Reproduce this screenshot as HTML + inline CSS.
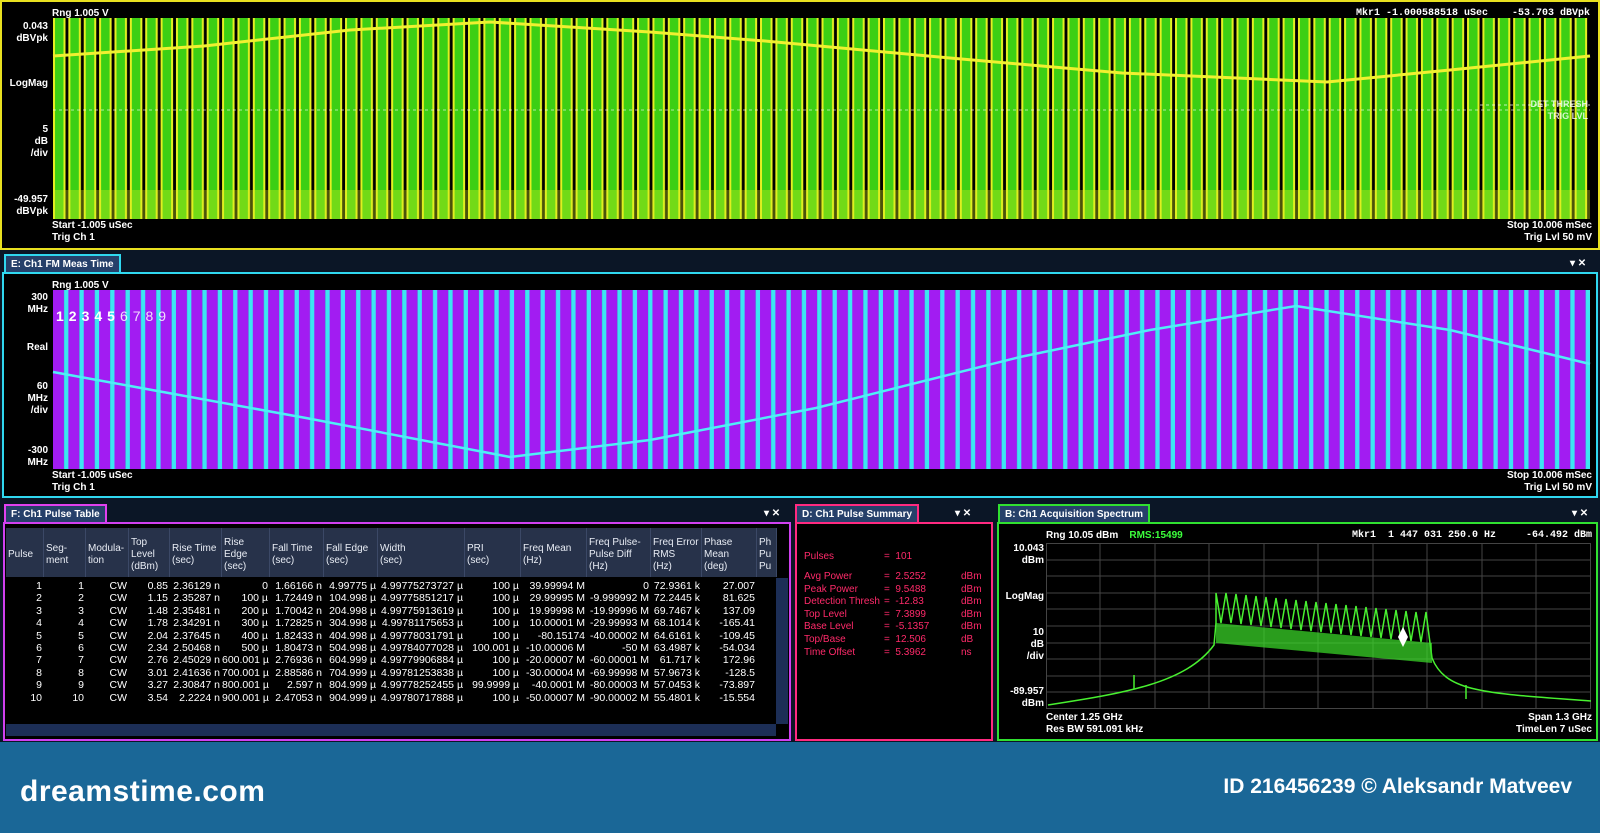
<!DOCTYPE html><html><head><meta charset="utf-8"><style>
*{margin:0;padding:0;box-sizing:border-box}
body{width:1600px;height:833px;background:#0b1626;overflow:hidden;position:relative;font-family:"Liberation Sans",sans-serif;color:#fff}
.a{position:absolute}
.lbl{position:absolute;font-size:10px;font-weight:bold;color:#fff;text-align:right;line-height:12px}
.tab{position:absolute;font-size:10px;font-weight:bold;color:#fff;padding:3px 5px;background:#26406a}
.row{position:absolute;left:6px;display:flex;font-size:10.5px;line-height:12.4px;color:#fff}
.row span{text-align:right;padding-right:2px;white-space:nowrap;overflow:hidden}
.hd{position:absolute;top:528px;left:6px;height:49px;display:flex;background:#27324a}
.hd span{font-size:10px;line-height:12px;color:#e8ecf4;padding:4px 2px 0 2px;border-right:1px solid #3b4866;white-space:nowrap;overflow:hidden;display:flex;align-items:center}
.sm{position:absolute;font-size:10px;color:#ff2a6a;line-height:12.6px}
</style></head><body>
<!-- Top panel -->
<div class="a" style="left:0;top:0;width:1600px;height:250px;border:2px solid #e8e020;background:#000"></div>
<svg class="a" style="left:0;top:0" width="1600" height="250">
<defs><pattern id="py" x="53" y="0" width="15.37" height="250" patternUnits="userSpaceOnUse">
<rect x="1" y="0" width="10.5" height="250" fill="#3ccf14" stroke="#e4f022" stroke-width="2"/></pattern></defs>
<rect x="53" y="18" width="1537" height="201" fill="url(#py)"/>
<rect x="53" y="190" width="1537" height="29" fill="#d8ee1e" opacity=".35"/>
<polyline fill="none" stroke="#f0f030" stroke-width="3" points="53,56 204,46 350,30 490,22 650,32 765,41 950,58 1122,73 1327,82 1450,70 1590,56"/>
<line x1="1480" y1="105" x2="1590" y2="105" stroke="#fff" stroke-dasharray="3 3" opacity=".7"/>
<line x1="53" y1="110" x2="1590" y2="110" stroke="#fff" stroke-dasharray="3 3" opacity=".6"/>
</svg>
<div class="lbl" style="left:52px;top:8px;text-align:left">Rng 1.005 V</div>
<div class="lbl" style="left:8px;top:21px;width:40px">0.043<br>dBVpk</div>
<div class="lbl" style="left:8px;top:78px;width:40px">LogMag</div>
<div class="lbl" style="left:8px;top:124px;width:40px">5<br>dB<br>/div</div>
<div class="lbl" style="left:4px;top:194px;width:44px">-49.957<br>dBVpk</div>
<div class="lbl" style="left:52px;top:220px;text-align:left">Start -1.005 uSec<br>Trig Ch 1</div>
<div class="lbl" style="left:1460px;top:220px;width:132px">Stop 10.006 mSec<br>Trig Lvl 50 mV</div>
<div class="lbl" style="left:1290px;top:8px;width:300px;font-family:'Liberation Mono',monospace">Mkr1 -1.000588518 uSec &nbsp;&nbsp; -53.703 dBVpk</div>
<div class="lbl" style="left:1500px;top:98px;width:88px;font-size:9px;opacity:.8">DET THRESH<br>TRIG LVL</div>
<!-- Middle panel -->
<div class="tab" style="left:4px;top:254px;border:2px solid #30d8f0;border-bottom:none">E: Ch1 FM Meas Time</div>
<div class="a" style="left:2px;top:272px;width:1596px;height:226px;border:2px solid #30d8f0;background:#000"></div>
<div class="lbl" style="left:1570px;top:258px">▾ ✕</div>
<svg class="a" style="left:0;top:0" width="1600" height="500">
<defs><pattern id="pp" x="53" y="0" width="15.37" height="500" patternUnits="userSpaceOnUse">
<rect x="0" y="0" width="11" height="500" fill="#a21cf2"/><rect x="11" y="0" width="4.4" height="500" fill="#3ce6f2"/></pattern></defs>
<rect x="53" y="290" width="1537" height="179" fill="url(#pp)"/>
<polyline fill="none" stroke="#50eef6" stroke-width="2.5" points="53,372 306,418 510,457 650,440 816,408 1020,357 1150,330 1296,306 1450,330 1590,364"/>
</svg>
<div class="lbl" style="left:52px;top:280px;text-align:left">Rng 1.005 V</div>
<div class="lbl" style="left:8px;top:292px;width:40px">300<br>MHz</div>
<div class="lbl" style="left:8px;top:342px;width:40px">Real</div>
<div class="lbl" style="left:8px;top:381px;width:40px">60<br>MHz<br>/div</div>
<div class="lbl" style="left:8px;top:445px;width:40px">-300<br>MHz</div>
<div class="lbl" style="left:56px;top:310px;font-size:14px;text-align:left;letter-spacing:5px">12345<span style="font-weight:normal;opacity:.85">6789</span></div>
<div class="lbl" style="left:52px;top:470px;text-align:left">Start -1.005 uSec<br>Trig Ch 1</div>
<div class="lbl" style="left:1460px;top:470px;width:132px">Stop 10.006 mSec<br>Trig Lvl 50 mV</div>
<!-- Table panel -->
<div class="tab" style="left:4px;top:504px;border:2px solid #e040f0;border-bottom:none">F: Ch1 Pulse Table</div>
<div class="lbl" style="left:764px;top:508px">▾ ✕</div>
<div class="a" style="left:3px;top:522px;width:788px;height:219px;border:2px solid #d040f0;background:#000"></div>
<div class="hd">
<span style="width:38px">Pulse</span><span style="width:42px">Seg-<br>ment</span><span style="width:43px">Modula-<br>tion</span><span style="width:41px">Top<br>Level<br>(dBm)</span><span style="width:52px">Rise Time<br>(sec)</span><span style="width:48px">Rise<br>Edge<br>(sec)</span><span style="width:54px">Fall Time<br>(sec)</span><span style="width:54px">Fall Edge<br>(sec)</span><span style="width:87px">Width<br>(sec)</span><span style="width:56px">PRI<br>(sec)</span><span style="width:66px">Freq Mean<br>(Hz)</span><span style="width:64px">Freq Pulse-<br>Pulse Diff<br>(Hz)</span><span style="width:51px">Freq Error<br>RMS<br>(Hz)</span><span style="width:55px">Phase<br>Mean<br>(deg)</span><span style="width:20px">Ph<br>Pu<br>Pu</span>
</div>
<div class="a" style="left:776px;top:578px;width:12px;height:146px;background:#1c2e56"></div>
<div class="a" style="left:6px;top:724px;width:770px;height:12px;background:#1c2e56"></div>
<div id="rows"></div>
<div class="row" style="top:580px"><span style="width:38px">1</span><span style="width:42px">1</span><span style="width:43px">CW</span><span style="width:41px">0.85</span><span style="width:52px">2.36129 n</span><span style="width:48px">0</span><span style="width:54px">1.66166 n</span><span style="width:54px">4.99775 µ</span><span style="width:87px">4.99775273727 µ</span><span style="width:56px">100 µ</span><span style="width:66px">39.99994 M</span><span style="width:64px">0</span><span style="width:51px">72.9361 k</span><span style="width:55px">27.007</span></div>
<div class="row" style="top:592.4px"><span style="width:38px">2</span><span style="width:42px">2</span><span style="width:43px">CW</span><span style="width:41px">1.15</span><span style="width:52px">2.35287 n</span><span style="width:48px">100 µ</span><span style="width:54px">1.72449 n</span><span style="width:54px">104.998 µ</span><span style="width:87px">4.99775851217 µ</span><span style="width:56px">100 µ</span><span style="width:66px">29.99995 M</span><span style="width:64px">-9.999992 M</span><span style="width:51px">72.2445 k</span><span style="width:55px">81.625</span></div>
<div class="row" style="top:604.8px"><span style="width:38px">3</span><span style="width:42px">3</span><span style="width:43px">CW</span><span style="width:41px">1.48</span><span style="width:52px">2.35481 n</span><span style="width:48px">200 µ</span><span style="width:54px">1.70042 n</span><span style="width:54px">204.998 µ</span><span style="width:87px">4.99775913619 µ</span><span style="width:56px">100 µ</span><span style="width:66px">19.99998 M</span><span style="width:64px">-19.99996 M</span><span style="width:51px">69.7467 k</span><span style="width:55px">137.09</span></div>
<div class="row" style="top:617.2px"><span style="width:38px">4</span><span style="width:42px">4</span><span style="width:43px">CW</span><span style="width:41px">1.78</span><span style="width:52px">2.34291 n</span><span style="width:48px">300 µ</span><span style="width:54px">1.72825 n</span><span style="width:54px">304.998 µ</span><span style="width:87px">4.99781175653 µ</span><span style="width:56px">100 µ</span><span style="width:66px">10.00001 M</span><span style="width:64px">-29.99993 M</span><span style="width:51px">68.1014 k</span><span style="width:55px">-165.41</span></div>
<div class="row" style="top:629.6px"><span style="width:38px">5</span><span style="width:42px">5</span><span style="width:43px">CW</span><span style="width:41px">2.04</span><span style="width:52px">2.37645 n</span><span style="width:48px">400 µ</span><span style="width:54px">1.82433 n</span><span style="width:54px">404.998 µ</span><span style="width:87px">4.99778031791 µ</span><span style="width:56px">100 µ</span><span style="width:66px">-80.15174</span><span style="width:64px">-40.00002 M</span><span style="width:51px">64.6161 k</span><span style="width:55px">-109.45</span></div>
<div class="row" style="top:642px"><span style="width:38px">6</span><span style="width:42px">6</span><span style="width:43px">CW</span><span style="width:41px">2.34</span><span style="width:52px">2.50468 n</span><span style="width:48px">500 µ</span><span style="width:54px">1.80473 n</span><span style="width:54px">504.998 µ</span><span style="width:87px">4.99784077028 µ</span><span style="width:56px">100.001 µ</span><span style="width:66px">-10.00006 M</span><span style="width:64px">-50 M</span><span style="width:51px">63.4987 k</span><span style="width:55px">-54.034</span></div>
<div class="row" style="top:654.4px"><span style="width:38px">7</span><span style="width:42px">7</span><span style="width:43px">CW</span><span style="width:41px">2.76</span><span style="width:52px">2.45029 n</span><span style="width:48px">600.001 µ</span><span style="width:54px">2.76936 n</span><span style="width:54px">604.999 µ</span><span style="width:87px">4.99779906884 µ</span><span style="width:56px">100 µ</span><span style="width:66px">-20.00007 M</span><span style="width:64px">-60.00001 M</span><span style="width:51px">61.717 k</span><span style="width:55px">172.96</span></div>
<div class="row" style="top:666.8px"><span style="width:38px">8</span><span style="width:42px">8</span><span style="width:43px">CW</span><span style="width:41px">3.01</span><span style="width:52px">2.41636 n</span><span style="width:48px">700.001 µ</span><span style="width:54px">2.88586 n</span><span style="width:54px">704.999 µ</span><span style="width:87px">4.99781253838 µ</span><span style="width:56px">100 µ</span><span style="width:66px">-30.00004 M</span><span style="width:64px">-69.99998 M</span><span style="width:51px">57.9673 k</span><span style="width:55px">-128.5</span></div>
<div class="row" style="top:679.2px"><span style="width:38px">9</span><span style="width:42px">9</span><span style="width:43px">CW</span><span style="width:41px">3.27</span><span style="width:52px">2.30847 n</span><span style="width:48px">800.001 µ</span><span style="width:54px">2.597 n</span><span style="width:54px">804.999 µ</span><span style="width:87px">4.99778252455 µ</span><span style="width:56px">99.9999 µ</span><span style="width:66px">-40.0001 M</span><span style="width:64px">-80.00003 M</span><span style="width:51px">57.0453 k</span><span style="width:55px">-73.897</span></div>
<div class="row" style="top:691.6px"><span style="width:38px">10</span><span style="width:42px">10</span><span style="width:43px">CW</span><span style="width:41px">3.54</span><span style="width:52px">2.2224 n</span><span style="width:48px">900.001 µ</span><span style="width:54px">2.47053 n</span><span style="width:54px">904.999 µ</span><span style="width:87px">4.99780717888 µ</span><span style="width:56px">100 µ</span><span style="width:66px">-50.00007 M</span><span style="width:64px">-90.00002 M</span><span style="width:51px">55.4801 k</span><span style="width:55px">-15.554</span></div>
<!-- Pulse summary -->
<div class="tab" style="left:795px;top:504px;border:2px solid #ff2a80;border-bottom:none">D: Ch1 Pulse Summary</div>
<div class="lbl" style="left:955px;top:508px">▾ ✕</div>
<div class="a" style="left:795px;top:522px;width:198px;height:219px;border:2px solid #ff2a80;background:#000"></div>
<div class="sm" style="left:804px;top:551px">Pulses</div><div class="sm" style="left:884px;top:551px">= &nbsp;101</div>
<div class="sm" style="left:804px;top:571px">Avg Power<br>Peak Power<br>Detection Thresh<br>Top Level<br>Base Level<br>Top/Base<br>Time Offset</div>
<div class="sm" style="left:884px;top:571px">= &nbsp;2.5252<br>= &nbsp;9.5488<br>= &nbsp;-12.83<br>= &nbsp;7.3899<br>= &nbsp;-5.1357<br>= &nbsp;12.506<br>= &nbsp;5.3962</div>
<div class="sm" style="left:961px;top:571px">dBm<br>dBm<br>dBm<br>dBm<br>dBm<br>dB<br>ns</div>
<!-- Spectrum -->
<div class="tab" style="left:998px;top:504px;border:2px solid #30e030;border-bottom:none">B: Ch1 Acquisition Spectrum</div>
<div class="lbl" style="left:1572px;top:508px">▾ ✕</div>
<div class="a" style="left:997px;top:522px;width:601px;height:219px;border:2px solid #30e030;background:#000"></div>
<div class="lbl" style="left:1046px;top:530px;text-align:left">Rng 10.05 dBm &nbsp;&nbsp;&nbsp;<span style="color:#3cff3c">RMS:15499</span></div>
<div class="lbl" style="left:1330px;top:530px;width:262px;font-family:'Liberation Mono',monospace">Mkr1 &nbsp;1 447 031 250.0 Hz &nbsp;&nbsp;&nbsp;&nbsp;-64.492 dBm</div>
<div class="lbl" style="left:1000px;top:543px;width:44px">10.043<br>dBm</div>
<div class="lbl" style="left:1000px;top:591px;width:44px">LogMag</div>
<div class="lbl" style="left:1000px;top:627px;width:44px">10<br>dB<br>/div</div>
<div class="lbl" style="left:1000px;top:686px;width:44px">-89.957<br>dBm</div>
<div class="lbl" style="left:1046px;top:712px;text-align:left">Center 1.25 GHz<br>Res BW 591.091 kHz</div>
<div class="lbl" style="left:1470px;top:712px;width:122px">Span 1.3 GHz<br>TimeLen 7 uSec</div>
<svg class="a" style="left:1046px;top:543px" width="545" height="166">
<g stroke="#444" stroke-width="1">
<line x1="0" y1="0.5" x2="545" y2="0.5"/><line x1="0" y1="17" x2="545" y2="17"/><line x1="0" y1="33" x2="545" y2="33"/><line x1="0" y1="50" x2="545" y2="50"/><line x1="0" y1="66" x2="545" y2="66"/><line x1="0" y1="83" x2="545" y2="83"/><line x1="0" y1="100" x2="545" y2="100"/><line x1="0" y1="116" x2="545" y2="116"/><line x1="0" y1="133" x2="545" y2="133"/><line x1="0" y1="149" x2="545" y2="149"/><line x1="0" y1="165.5" x2="545" y2="165.5"/>
<line x1="0.5" y1="0" x2="0.5" y2="166"/><line x1="54" y1="0" x2="54" y2="166"/><line x1="109" y1="0" x2="109" y2="166"/><line x1="163" y1="0" x2="163" y2="166"/><line x1="218" y1="0" x2="218" y2="166"/><line x1="272" y1="0" x2="272" y2="166"/><line x1="327" y1="0" x2="327" y2="166"/><line x1="381" y1="0" x2="381" y2="166"/><line x1="436" y1="0" x2="436" y2="166"/><line x1="490" y1="0" x2="490" y2="166"/><line x1="544.5" y1="0" x2="544.5" y2="166"/></g>
<path d="M2,162 C80,150 140,140 168,102 L170,80 L170,50 L175,80 L180,50 L185,80 L190,51 L195,81 L200,52 L205,82 L210,53 L215,83 L220,54 L225,84 L230,55 L235,85 L240,56 L245,86 L250,57 L255,87 L260,58 L265,88 L270,59 L275,89 L280,60 L285,90 L290,61 L295,91 L300,62 L305,92 L310,63 L315,93 L320,64 L325,94 L330,65 L335,95 L340,66 L345,96 L350,67 L355,97 L360,68 L365,98 L370,69 L375,99 L380,69 L384,100 L386,115 C400,150 440,150 545,158" fill="none" stroke="#48f030" stroke-width="1.5"/>
<path d="M170,80 L386,100 L386,120 L170,100Z" fill="#3ce02a" opacity=".7"/>
<line x1="420" y1="156" x2="420" y2="142" stroke="#48f030" stroke-width="1.5"/>
<line x1="88" y1="146" x2="88" y2="132" stroke="#48f030" stroke-width="1.5"/>
<path d="M357,84 L362,94 L357,104 L352,94Z" fill="#fff"/>
</svg>
<!-- Footer -->
<div class="a" style="left:0;top:742px;width:1600px;height:91px;background:#1a6797"></div>
<div class="a" style="left:20px;top:775px;font-size:30px;font-weight:bold;color:#fff;letter-spacing:0.5px">dreamstime.com</div>
<div class="a" style="left:1152px;top:775px;width:420px;text-align:right;font-size:21px;font-weight:bold;color:#fff">ID 216456239 © Aleksandr Matveev</div>
</body></html>
